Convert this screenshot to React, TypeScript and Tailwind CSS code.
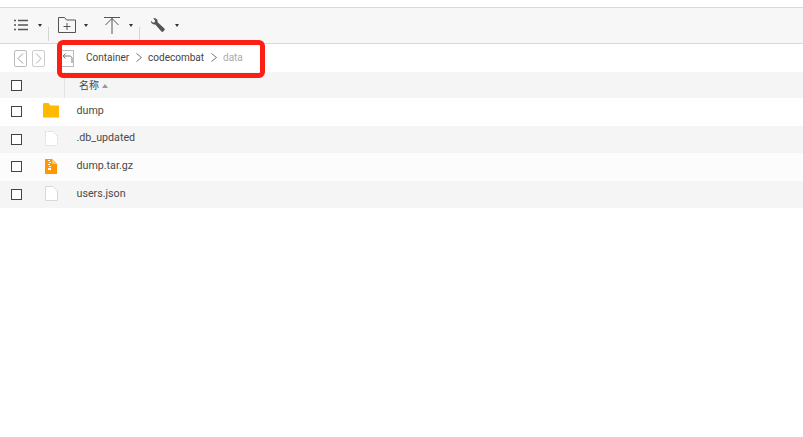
import React from 'react';

const Caret = ({ gap }: { gap: string }) => (
  <span className={`${gap} mt-[1px] w-0 h-0 border-x-[2.500px] border-x-transparent border-t-[3px] border-t-[#333]`} />
);

const Separator = () => <div className="w-px h-[14px] bg-[#d4d4d4] self-end mb-[1px]" />;

const Checkbox = ({ className = '' }: { className?: string }) => (
  <div className={`w-[11px] h-[11px] border border-[#444] bg-white shrink-0 ${className}`} />
);

const Chevron = () => (
  <svg className="ml-[7px] mr-[6px]" width="6" height="9" viewBox="0 0 6 9" fill="none" stroke="#666" strokeWidth="0.9">
    <path d="m.5.5 5 4-5 4" />
  </svg>
);

const ListIcon = () => (
  <svg width="14" height="12" viewBox="0 0 14 12" fill="none" stroke="#555" strokeWidth="1.4">
    <path d="M0 1.500h2M4 1.500h10M0 6h2M4 6h10M0 10.500h2M4 10.500h10" />
  </svg>
);

const NewFolderIcon = () => (
  <svg width="18" height="16" viewBox="0 0 18 16" fill="none" stroke="#555" strokeWidth="1">
    <path d="M.5.5h6l2 2.500h9v12.500h-17z" />
    <path d="M9 6v7M5.500 9.500h7" />
  </svg>
);

const UploadIcon = () => (
  <svg width="18" height="17" viewBox="0 0 18 17" fill="none" stroke="#555" strokeWidth="1">
    <path d="M1 .5h16M9 17V1M2.500 8 9 1.500 15.500 8" />
  </svg>
);

const WrenchIcon = () => (
  <svg width="15" height="15" viewBox="0 0 15 15" fill="#555">
    <path d="M1 2.800 3 4.700l1.700-.4.400-1.700L3.100.6C4.700-.2 6.600.4 7.300 1.800c.4.800.4 1.600.1 2.300l7 6.400c.5.500.5 1.300 0 1.800l-1.200 1.200c-.5.500-1.300.5-1.800 0L5.300 6.400c-1 .3-2.200.1-3.100-.6C1.300 5 .8 3.800 1 2.800z" />
  </svg>
);

const FolderIcon = () => (
  <svg className="mb-[4px]" width="16" height="15" viewBox="0 0 16 15">
    <path d="M0 1.500C0 .700.500 0 1.300 0h4.200l2 2.500H16V14.500H0z" fill="#ffb900" />
  </svg>
);

const FileIcon = ({ dashed }: { dashed?: boolean }) => (
  <svg className="mb-[2px]" width="13" height="15" viewBox="0 0 13 15" fill="#fff" stroke="#d8d8d8" strokeWidth="1" strokeDasharray={dashed ? '1.500 1' : undefined}>
    <path d="M.5.5h7.500l4.500 4.500v9.500h-12z" />
  </svg>
);

const ArchiveIcon = () => (
  <svg className="mb-[2px]" width="12" height="15" viewBox="0 0 12 15">
    <path d="M0 0h7l5 5v10H0z" fill="#ff9800" />
    <path d="M7 0l5 5H7z" fill="#ffc266" />
    <path d="M3 1h2v1H3zM4 3h2v1H4zM3 5h2v1H3zM4 7h2v1H4zM3 9h3v2H3z" fill="#fff" />
  </svg>
);

const files = [
  { name: 'dump', icon: <FolderIcon />, height: 'h-[28px]', bg: 'bg-white', box: 'mb-[1px]', text: 'mb-[2px]' },
  { name: '.db_updated', icon: <FileIcon dashed />, height: 'h-[27px]', bg: 'bg-[#f5f5f5]', box: '', text: 'mb-[3px]' },
  { name: 'dump.tar.gz', icon: <ArchiveIcon />, height: 'h-[28px]', bg: 'bg-[#fcfcfc]', box: 'mb-[1px]', text: 'mb-[2px]' },
  { name: 'users.json', icon: <FileIcon />, height: 'h-[27px]', bg: 'bg-[#f5f5f5]', box: '', text: 'mb-[1px]' },
];

export default function App() {
  return (
    <div className="relative w-[803px] h-[437px] bg-white overflow-hidden font-['Roboto',sans-serif] text-[10.700px] text-[#444]">
      <div className="h-[7px]" />

      {/* toolbar */}
      <div className="h-[37px] bg-[#f7f7f7] border-y border-[#d9d9d9] flex items-center pl-[14px] pb-[1px]">
        <div className="flex items-center w-[34px]">
          <ListIcon />
          <Caret gap="ml-[10px]" />
        </div>
        <Separator />
        <div className="flex items-center ml-[9px] w-[45px]">
          <NewFolderIcon />
          <Caret gap="ml-[8px]" />
        </div>
        <div className="flex items-center w-[36px]">
          <UploadIcon />
          <Caret gap="ml-[8px]" />
        </div>
        <Separator />
        <div className="flex items-center ml-[10px]">
          <WrenchIcon />
          <Caret gap="ml-[10px]" />
        </div>
      </div>

      {/* breadcrumb */}
      <div className="h-[28px] flex items-center pl-[14px]">
        <div className="w-[13px] h-[17px] border border-[#bbb] rounded-[2px] flex items-center justify-center">
          <svg width="7" height="11" viewBox="0 0 7 11" fill="none" stroke="#999"><path d="M6 .5 1 5.500l5 5" /></svg>
        </div>
        <div className="ml-[5px] w-[13px] h-[17px] border border-[#ccc] rounded-[2px] flex items-center justify-center">
          <svg width="7" height="11" viewBox="0 0 7 11" fill="none" stroke="#aaa"><path d="m1 .5 5 5-5 5" /></svg>
        </div>
        <div className="ml-[15px] w-[14px] h-[17px] border-y border-r border-[#bbb] flex items-center justify-end">
          <svg width="11" height="10" viewBox="0 0 11 10" fill="none" stroke="#777"><path d="M3.500.5 1 3l2.500 2.500M1 3h6.500c1.500 0 2.500 1 2.500 2.500V10" /></svg>
        </div>
        <div className="ml-[12px] mb-[1px] flex items-center text-[10px] text-[#444]">
          <span>Container</span>
          <Chevron />
          <span>codecombat</span>
          <Chevron />
          <span className="text-[#aaa]">data</span>
        </div>
      </div>

      {/* table header */}
      <div className="h-[26px] bg-[#f5f5f5] flex items-center pl-[11px]">
        <Checkbox />
        <div className="w-px h-[26px] bg-[#e2e2e2] ml-[42px]" />
        <div className="ml-[14px] mb-[2px] flex items-center font-['Noto_Sans_CJK_SC',sans-serif] text-[10px] text-[#444]">
          <span>名称</span>
          <span className="ml-[3px] mt-[3px] w-0 h-0 border-x-[3.500px] border-x-transparent border-b-[4px] border-b-[#999]" />
        </div>
      </div>

      {/* rows */}
      {files.map(file => (
        <div key={file.name} className={`${file.height} ${file.bg} flex items-center pl-[11px]`}>
          <Checkbox className={file.box} />
          <div className="w-[16px] ml-[21px] flex justify-center">{file.icon}</div>
          <span className={`ml-[17.500px] ${file.text} text-[#4a4a4a]`}>{file.name}</span>
        </div>
      ))}

      {/* annotation */}
      <div className="absolute left-[57px] top-[40px] w-[208px] h-[38px] border-[5px] border-[#fe1f14] rounded-[6px]" />
    </div>
  );
}
